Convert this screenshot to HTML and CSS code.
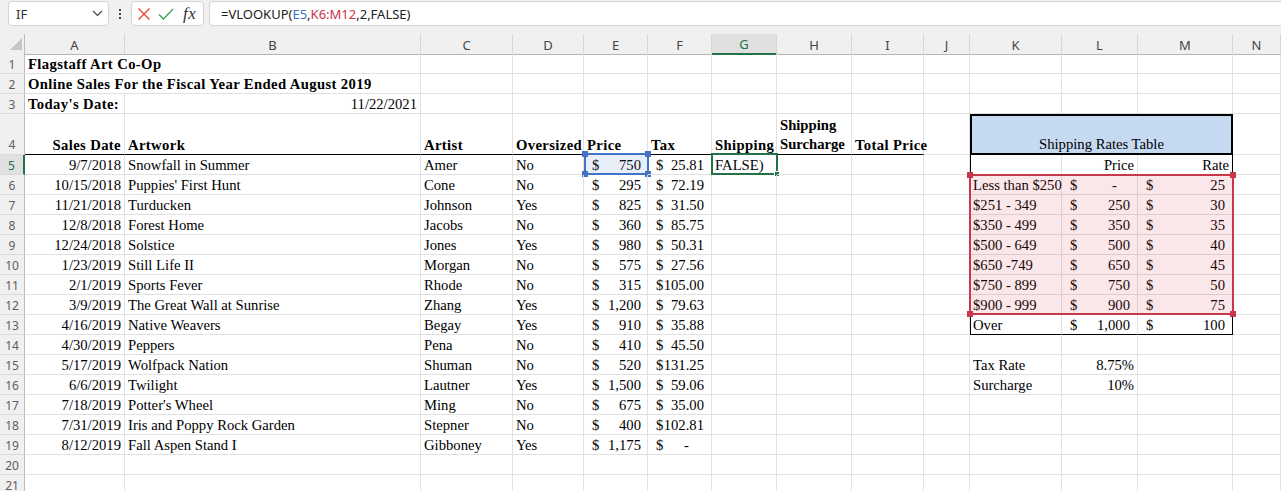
FILE: index.html
```html
<!DOCTYPE html>
<html>
<head>
<meta charset="utf-8">
<title>Flagstaff Art Co-Op</title>
<link rel="stylesheet" href="styles.css">
</head>
<body>
<div class="app">
  <div class="fbar">
    <div class="namebox"><span>IF</span>
      <svg width="11" height="7" viewBox="0 0 11 7"><path d="M1 1 L5.5 5.5 L10 1" fill="none" stroke="#444" stroke-width="1.2"/></svg>
    </div>
    <div class="dots"><i></i><i></i><i></i></div>
    <div class="btns">
      <svg width="14" height="14" viewBox="0 0 14 14"><path d="M1.5 1.5 L12.5 12.5 M12.5 1.5 L1.5 12.5" stroke="#e8453c" stroke-width="1.4" fill="none"/></svg>
      <svg width="16" height="12" viewBox="0 0 16 12"><path d="M1 6.5 L5.5 11 L15 1" stroke="#3f9f52" stroke-width="1.4" fill="none"/></svg>
      <span class="fx">fx</span>
    </div>
    <div class="formula">=VLOOKUP(<span class="refb">E5</span>,<span class="refr">K6:M12</span>,2,FALSE)</div>
  </div>

  <div class="sheet">
    <div class="row hdr">
      <div class="corner"><svg width="25" height="20" viewBox="0 0 25 20"><polygon points="22,4 22,16 10,16" fill="#c6c6c6"/></svg></div>
      <div class="ch">A</div><div class="ch">B</div><div class="ch">C</div><div class="ch">D</div><div class="ch">E</div><div class="ch">F</div><div class="ch act">G</div><div class="ch">H</div><div class="ch">I</div><div class="ch">J</div><div class="ch">K</div><div class="ch">L</div><div class="ch">M</div><div class="ch">N</div>
    </div>

    <div class="row">
      <div class="rh">1</div><div class="c b span2">Flagstaff Art Co-Op</div>
      <div class="c"></div><div class="c"></div><div class="c"></div><div class="c"></div><div class="c"></div><div class="c"></div><div class="c"></div><div class="c"></div><div class="c"></div><div class="c"></div><div class="c"></div><div class="c"></div>
    </div>
    <div class="row">
      <div class="rh">2</div><div class="c b span2">Online Sales For the Fiscal Year Ended August 2019</div>
      <div class="c"></div><div class="c"></div><div class="c"></div><div class="c"></div><div class="c"></div><div class="c"></div><div class="c"></div><div class="c"></div><div class="c"></div><div class="c"></div><div class="c"></div><div class="c"></div>
    </div>
    <div class="row">
      <div class="rh">3</div><div class="c b">Today's Date:</div><div class="c r">11/22/2021</div>
      <div class="c"></div><div class="c"></div><div class="c"></div><div class="c"></div><div class="c"></div><div class="c"></div><div class="c"></div><div class="c"></div><div class="c"></div><div class="c"></div><div class="c"></div><div class="c"></div>
    </div>
    <div class="row tall">
      <div class="rh">4</div>
      <div class="c b r bb">Sales Date</div><div class="c b bb">Artwork</div><div class="c b bb">Artist</div><div class="c b bb">Oversized</div><div class="c b bb">Price</div><div class="c b bb">Tax</div><div class="c b bb">Shipping</div><div class="c b bb wrap">Shipping Surcharge</div><div class="c b bb">Total Price</div>
      <div class="c"></div><div class="c hbox">Shipping Rates Table</div><div class="c"></div>
    </div>
    <div class="row">
      <div class="rh act">5</div>
      <div class="c r">9/7/2018</div><div class="c">Snowfall in Summer</div><div class="c">Amer</div><div class="c">No</div>
      <div class="c a ae"><span>$</span><span>750</span><div class="selb"><i class="h tl"></i><i class="h trr"></i><i class="h bl"></i><i class="h br"></i></div></div>
      <div class="c a"><span>$</span><span>25.81</span></div>
      <div class="c">FALSE)<div class="selg"><i class="gh"></i></div></div>
      <div class="c"></div><div class="c"></div><div class="c"></div>
      <div class="c kl"></div><div class="c r">Price</div><div class="c r mr">Rate</div><div class="c"></div>
    </div>
    <div class="row">
      <div class="rh">6</div>
      <div class="c r">10/15/2018</div><div class="c">Puppies' First Hunt</div><div class="c">Cone</div><div class="c">No</div>
      <div class="c a ae"><span>$</span><span>295</span></div><div class="c a"><span>$</span><span>72.19</span></div>
      <div class="c"></div><div class="c"></div><div class="c"></div><div class="c"></div>
      <div class="c kl">Less than $250<div class="selr"><i class="h tl"></i><i class="h trr"></i><i class="h bl"></i><i class="h br"></i></div></div>
      <div class="c a"><span>$</span><span class="dash">-</span></div><div class="c a mr"><span>$</span><span>25</span></div><div class="c"></div>
    </div>
    <div class="row">
      <div class="rh">7</div>
      <div class="c r">11/21/2018</div><div class="c">Turducken</div><div class="c">Johnson</div><div class="c">Yes</div>
      <div class="c a ae"><span>$</span><span>825</span></div><div class="c a"><span>$</span><span>31.50</span></div>
      <div class="c"></div><div class="c"></div><div class="c"></div><div class="c"></div>
      <div class="c kl">$251 - 349</div><div class="c a"><span>$</span><span>250</span></div><div class="c a mr"><span>$</span><span>30</span></div><div class="c"></div>
    </div>
    <div class="row">
      <div class="rh">8</div>
      <div class="c r">12/8/2018</div><div class="c">Forest Home</div><div class="c">Jacobs</div><div class="c">No</div>
      <div class="c a ae"><span>$</span><span>360</span></div><div class="c a"><span>$</span><span>85.75</span></div>
      <div class="c"></div><div class="c"></div><div class="c"></div><div class="c"></div>
      <div class="c kl">$350 - 499</div><div class="c a"><span>$</span><span>350</span></div><div class="c a mr"><span>$</span><span>35</span></div><div class="c"></div>
    </div>
    <div class="row">
      <div class="rh">9</div>
      <div class="c r">12/24/2018</div><div class="c">Solstice</div><div class="c">Jones</div><div class="c">Yes</div>
      <div class="c a ae"><span>$</span><span>980</span></div><div class="c a"><span>$</span><span>50.31</span></div>
      <div class="c"></div><div class="c"></div><div class="c"></div><div class="c"></div>
      <div class="c kl">$500 - 649</div><div class="c a"><span>$</span><span>500</span></div><div class="c a mr"><span>$</span><span>40</span></div><div class="c"></div>
    </div>
    <div class="row">
      <div class="rh">10</div>
      <div class="c r">1/23/2019</div><div class="c">Still Life II</div><div class="c">Morgan</div><div class="c">No</div>
      <div class="c a ae"><span>$</span><span>575</span></div><div class="c a"><span>$</span><span>27.56</span></div>
      <div class="c"></div><div class="c"></div><div class="c"></div><div class="c"></div>
      <div class="c kl">$650 -749</div><div class="c a"><span>$</span><span>650</span></div><div class="c a mr"><span>$</span><span>45</span></div><div class="c"></div>
    </div>
    <div class="row">
      <div class="rh">11</div>
      <div class="c r">2/1/2019</div><div class="c">Sports Fever</div><div class="c">Rhode</div><div class="c">No</div>
      <div class="c a ae"><span>$</span><span>315</span></div><div class="c a"><span>$</span><span>105.00</span></div>
      <div class="c"></div><div class="c"></div><div class="c"></div><div class="c"></div>
      <div class="c kl">$750 - 899</div><div class="c a"><span>$</span><span>750</span></div><div class="c a mr"><span>$</span><span>50</span></div><div class="c"></div>
    </div>
    <div class="row">
      <div class="rh">12</div>
      <div class="c r">3/9/2019</div><div class="c">The Great Wall at Sunrise</div><div class="c">Zhang</div><div class="c">Yes</div>
      <div class="c a ae"><span>$</span><span>1,200</span></div><div class="c a"><span>$</span><span>79.63</span></div>
      <div class="c"></div><div class="c"></div><div class="c"></div><div class="c"></div>
      <div class="c kl">$900 - 999</div><div class="c a"><span>$</span><span>900</span></div><div class="c a mr"><span>$</span><span>75</span></div><div class="c"></div>
    </div>
    <div class="row">
      <div class="rh">13</div>
      <div class="c r">4/16/2019</div><div class="c">Native Weavers</div><div class="c">Begay</div><div class="c">Yes</div>
      <div class="c a ae"><span>$</span><span>910</span></div><div class="c a"><span>$</span><span>35.88</span></div>
      <div class="c"></div><div class="c"></div><div class="c"></div><div class="c"></div>
      <div class="c kl kb">Over</div><div class="c a kb"><span>$</span><span>1,000</span></div><div class="c a mr kb"><span>$</span><span>100</span></div><div class="c"></div>
    </div>
    <div class="row">
      <div class="rh">14</div>
      <div class="c r">4/30/2019</div><div class="c">Peppers</div><div class="c">Pena</div><div class="c">No</div>
      <div class="c a ae"><span>$</span><span>410</span></div><div class="c a"><span>$</span><span>45.50</span></div>
      <div class="c"></div><div class="c"></div><div class="c"></div><div class="c"></div>
      <div class="c"></div><div class="c"></div><div class="c"></div><div class="c"></div>
    </div>
    <div class="row">
      <div class="rh">15</div>
      <div class="c r">5/17/2019</div><div class="c">Wolfpack Nation</div><div class="c">Shuman</div><div class="c">No</div>
      <div class="c a ae"><span>$</span><span>520</span></div><div class="c a"><span>$</span><span>131.25</span></div>
      <div class="c"></div><div class="c"></div><div class="c"></div><div class="c"></div>
      <div class="c">Tax Rate</div><div class="c r">8.75%</div><div class="c"></div><div class="c"></div>
    </div>
    <div class="row">
      <div class="rh">16</div>
      <div class="c r">6/6/2019</div><div class="c">Twilight</div><div class="c">Lautner</div><div class="c">Yes</div>
      <div class="c a ae"><span>$</span><span>1,500</span></div><div class="c a"><span>$</span><span>59.06</span></div>
      <div class="c"></div><div class="c"></div><div class="c"></div><div class="c"></div>
      <div class="c">Surcharge</div><div class="c r">10%</div><div class="c"></div><div class="c"></div>
    </div>
    <div class="row">
      <div class="rh">17</div>
      <div class="c r">7/18/2019</div><div class="c">Potter's Wheel</div><div class="c">Ming</div><div class="c">No</div>
      <div class="c a ae"><span>$</span><span>675</span></div><div class="c a"><span>$</span><span>35.00</span></div>
      <div class="c"></div><div class="c"></div><div class="c"></div><div class="c"></div>
      <div class="c"></div><div class="c"></div><div class="c"></div><div class="c"></div>
    </div>
    <div class="row">
      <div class="rh">18</div>
      <div class="c r">7/31/2019</div><div class="c">Iris and Poppy Rock Garden</div><div class="c">Stepner</div><div class="c">No</div>
      <div class="c a ae"><span>$</span><span>400</span></div><div class="c a"><span>$</span><span>102.81</span></div>
      <div class="c"></div><div class="c"></div><div class="c"></div><div class="c"></div>
      <div class="c"></div><div class="c"></div><div class="c"></div><div class="c"></div>
    </div>
    <div class="row">
      <div class="rh">19</div>
      <div class="c r">8/12/2019</div><div class="c">Fall Aspen Stand I</div><div class="c">Gibboney</div><div class="c">Yes</div>
      <div class="c a ae"><span>$</span><span>1,175</span></div><div class="c a"><span>$</span><span class="dash2">-</span></div>
      <div class="c"></div><div class="c"></div><div class="c"></div><div class="c"></div>
      <div class="c"></div><div class="c"></div><div class="c"></div><div class="c"></div>
    </div>
    <div class="row">
      <div class="rh">20</div>
      <div class="c"></div><div class="c"></div><div class="c"></div><div class="c"></div><div class="c"></div><div class="c"></div><div class="c"></div><div class="c"></div><div class="c"></div><div class="c"></div><div class="c"></div><div class="c"></div><div class="c"></div><div class="c"></div>
    </div>
    <div class="row">
      <div class="rh">21</div>
      <div class="c"></div><div class="c"></div><div class="c"></div><div class="c"></div><div class="c"></div><div class="c"></div><div class="c"></div><div class="c"></div><div class="c"></div><div class="c"></div><div class="c"></div><div class="c"></div><div class="c"></div><div class="c"></div>
    </div>
  </div>
</div>
</body>
</html>
```

FILE: styles.css
```css
* { box-sizing: border-box; }
html, body { margin: 0; padding: 0; background: #ffffff; }
body { overflow: hidden; }

.app {
  width: 1281px;
  height: 491px;
  overflow: hidden;
  background: #ffffff;
}

/* ---------- formula bar ---------- */
.fbar {
  height: 34px;
  background: #f0f0f0;
  display: flex;
  align-items: flex-start;
  padding-top: 1px;
}
.namebox {
  margin-left: 8px;
  width: 101px;
  height: 25px;
  background: #ffffff;
  border: 1px solid #d4d4d4;
  border-radius: 4px;
  display: flex;
  align-items: center;
  justify-content: space-between;
  padding: 0 5px 0 7px;
  font: 13px "Noto Sans", "Open Sans", sans-serif;
  color: #333333;
}
.dots {
  width: 22px;
  height: 25px;
  display: flex;
  flex-direction: column;
  align-items: center;
  justify-content: center;
  gap: 2px;
}
.dots i {
  display: block;
  width: 2px;
  height: 2px;
  background: #444444;
}
.btns {
  width: 73px;
  height: 25px;
  background: #ffffff;
  border: 1px solid #d4d4d4;
  border-radius: 4px;
  display: flex;
  align-items: center;
  gap: 7px;
  padding-left: 5px;
}
.fx {
  font: italic 17px "Liberation Serif", serif;
  color: #333333;
  margin-left: 2px;
  letter-spacing: 0.5px;
}
.formula {
  margin-left: 5px;
  flex: 1;
  height: 25px;
  background: #ffffff;
  border: 1px solid #d4d4d4;
  border-right: none;
  border-radius: 4px 0 0 4px;
  padding-left: 11px;
  display: flex;
  align-items: center;
  font: 13px "Noto Sans", "Open Sans", sans-serif;
  color: #222222;
  white-space: nowrap;
}
.refb { color: #3a6fc4; }
.refr { color: #c8324a; }

/* ---------- sheet grid ---------- */
.sheet {
  --cols: 25px 100px 296px 92px 71px 64px 64px 65px 75px 72px 46px 92px 76px 95px 48px;
}
.row {
  display: grid;
  grid-template-columns: var(--cols);
  height: 20px;
}
.row.tall { height: 41px; }

.hdr { background: #f0f0f0; }
.corner {
  border-right: 1px solid #bdbdbd;
  border-bottom: 1px solid #bdbdbd;
}
.corner svg { display: block; }
.ch {
  border-right: 1px solid #d6d6d6;
  border-bottom: 1px solid #b5b5b5;
  display: flex;
  align-items: center;
  justify-content: center;
  font: 13px "Noto Sans", "Open Sans", sans-serif;
  color: #444444;
  padding-top: 1px;
}
.ch.act {
  background: #e0e0e0;
  color: #217346;
  border-bottom: 2px solid #217346;
}

.rh {
  background: #f0f0f0;
  border-right: 1px solid #bdbdbd;
  border-bottom: 1px solid #dadada;
  display: flex;
  align-items: center;
  justify-content: center;
  font: 12px "Noto Sans", "Open Sans", sans-serif;
  color: #5e5e5e;
  padding-top: 2px;
}
.row.tall .rh { align-items: flex-end; padding-bottom: 1px; }
.rh.act {
  background: #e0e0e0;
  color: #217346;
  border-right: 2px solid #217346;
}

.c {
  position: relative;
  min-width: 0;
  border-right: 1px solid #e1e1e1;
  border-bottom: 1px solid #e1e1e1;
  display: flex;
  align-items: flex-end;
  padding: 0 3px 0 3px;
  font: 14.67px "Liberation Serif", "Times New Roman", serif;
  line-height: 17px;
  color: #000000;
  white-space: nowrap;
  overflow: visible;
}
.c.span2 { grid-column: span 2; }
.c.r { justify-content: flex-end; padding-right: 3px; }
.c.b { font-weight: bold; letter-spacing: 0.38px; }
.c.bb { border-bottom-color: #000000; }
.c.wrap {
  white-space: normal;
  line-height: 19px;
  letter-spacing: 0;
}

/* accounting format */
.c.a {
  justify-content: space-between;
  padding: 0 7px 0 8px;
}
.c.ae { padding-right: 6px; }
.dash { padding-right: 13px; }
.dash2 { padding-right: 15px; }

/* ---------- shipping rates table ---------- */
.hbox {
  grid-column: span 3;
  background: #c5d9f1;
  border: 2px solid #000000;
  justify-content: center;
  padding-bottom: 0;
}
.kl { border-left: 1px solid #000000; padding-left: 2px; }
.mr { border-right-color: #000000; }
.kb { border-bottom-color: #000000; }

/* ---------- selection overlays ---------- */
.selb {
  position: absolute;
  left: 0;
  top: -2px;
  right: -2px;
  bottom: -1px;
  border: 2px solid #4472c4;
  background: rgba(68, 114, 196, 0.12);
  pointer-events: none;
}
.selb .h { background: #4472c4; }

.selg {
  position: absolute;
  left: -1px;
  top: -2px;
  right: -2px;
  bottom: -1px;
  border: 2px solid #217346;
  pointer-events: none;
}
.gh {
  position: absolute;
  right: -4px;
  bottom: -4px;
  width: 6px;
  height: 6px;
  background: #217346;
  border: 1px solid #ffffff;
}

.selr {
  position: absolute;
  left: -2px;
  top: -1px;
  width: 265px;
  height: 141px;
  border: 2px solid #c8374a;
  background: rgba(214, 60, 70, 0.12);
  pointer-events: none;
  z-index: 2;
}
.selr .h { background: #c8374a; }

.h {
  position: absolute;
  display: block;
  width: 6px;
  height: 6px;
}
.h.tl { left: -4px; top: -4px; }
.h.trr { right: -4px; top: -4px; }
.h.bl { left: -4px; bottom: -4px; }
.h.br { right: -4px; bottom: -4px; }
```
